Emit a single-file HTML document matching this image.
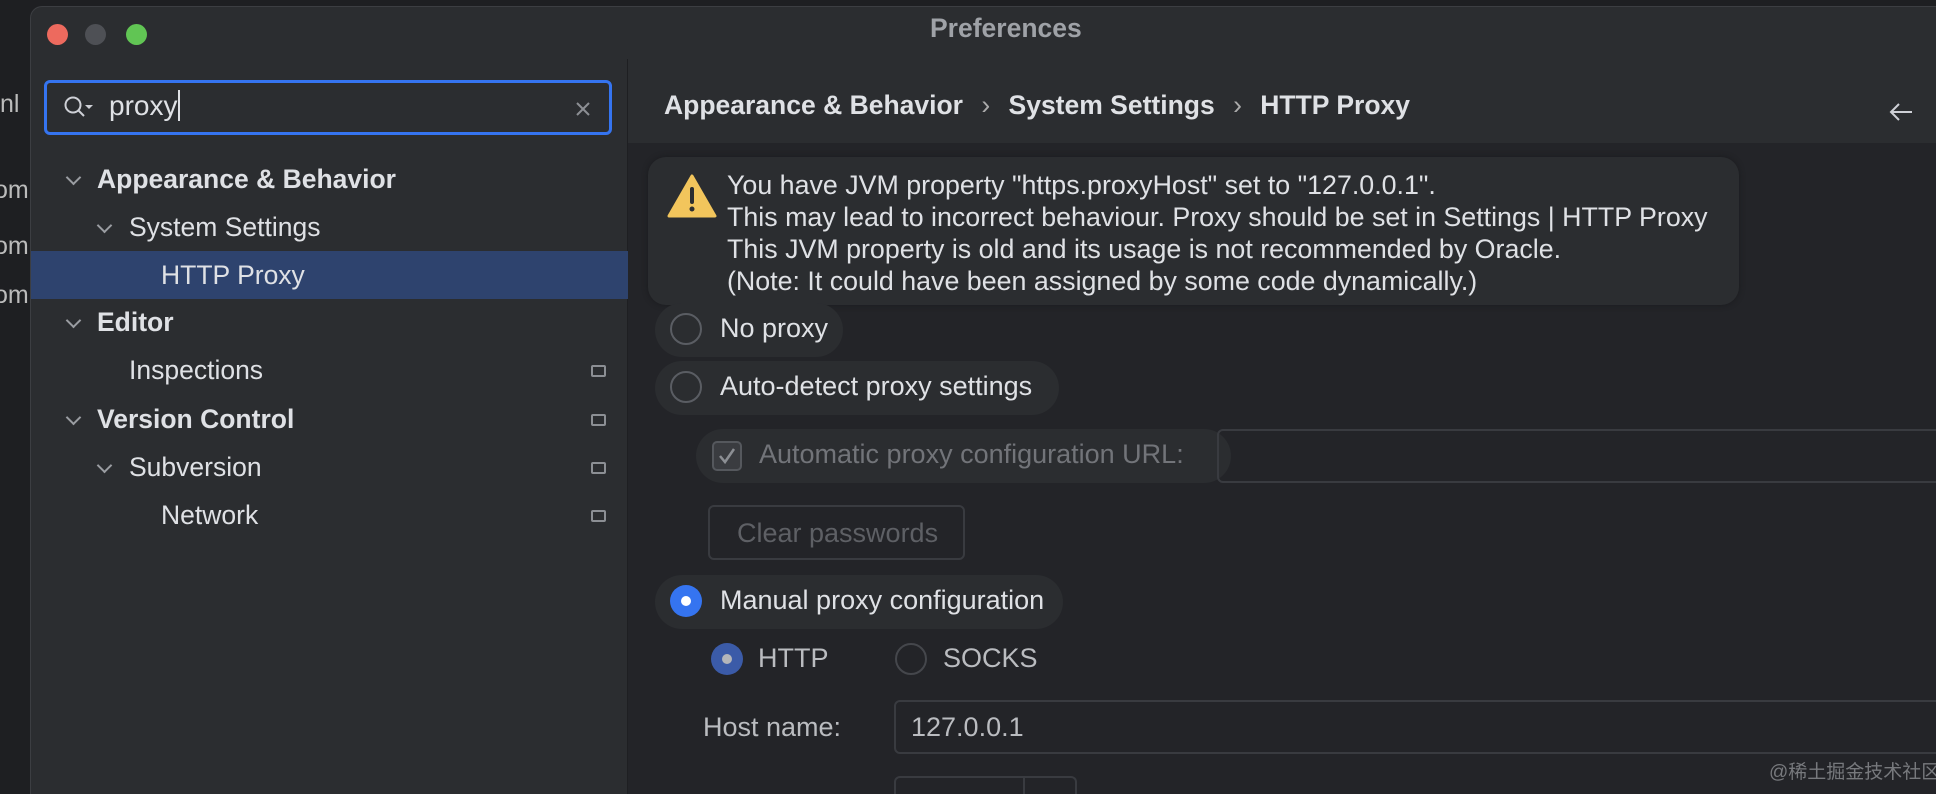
<!DOCTYPE html>
<html><head><meta charset="utf-8"><style>
*{margin:0;padding:0;box-sizing:border-box}
html,body{width:1936px;height:794px;overflow:hidden}
body{background:#1e1f22;font-family:"Liberation Sans","Noto Sans CJK SC",sans-serif;color:#dfe1e5;position:relative}
.a{position:absolute;white-space:nowrap}
.win{position:absolute;left:30px;top:6px;width:1906px;height:788px;background:#2b2d30;border-radius:12px 0 0 0;border-left:1px solid #3c3e42;border-top:1px solid #3c3e42;overflow:hidden}
.dot{position:absolute;width:21px;height:21px;border-radius:50%;top:17px}
.tree{font-size:26.5px;color:#dfe1e5}
.chev{position:absolute;width:11px;height:11px;border-right:2px solid #9a9da2;border-bottom:2px solid #9a9da2;transform:rotate(45deg)}
.pill{position:absolute;background:#2b2d30;border-radius:27px}
.radio{position:absolute;width:32px;height:32px;border-radius:50%;border:2px solid #5a5d63}
.lbl{font-size:27px;color:#dfe1e5}
.ic{position:absolute;width:15px;height:12px;border:2px solid #8c8f94;border-radius:2px}
</style></head><body>
<div class="a" style="left:0;top:90px;font-size:25px;color:#bbb">nl</div>
<div class="a" style="left:-6px;top:176px;font-size:25px;color:#bbb">om</div>
<div class="a" style="left:-6px;top:232px;font-size:25px;color:#bbb">om</div>
<div class="a" style="left:-6px;top:281px;font-size:25px;color:#bbb">om</div>
<div class="win">
 <div class="dot" style="left:16px;background:#ed6a5e"></div>
 <div class="dot" style="left:54px;background:#4e5055"></div>
 <div class="dot" style="left:95px;background:#61c554"></div>
 <div class="a" style="left:899px;top:6px;font-size:26.5px;font-weight:bold;color:#9fa2a7">Preferences</div>
 <div class="a" style="left:597px;top:136px;width:1310px;height:652px;background:#232428"></div>
 <div class="a" style="left:596px;top:52px;width:1px;height:736px;background:#1e1f22"></div>
 <div class="a" style="left:13px;top:73px;width:568px;height:55px;border:3px solid #3574f0;border-radius:6px;background:#2b2d30"></div>
 <svg class="a" style="left:32px;top:88px" width="34" height="26" viewBox="0 0 34 26"><circle cx="10" cy="10" r="7.5" fill="none" stroke="#ced0d6" stroke-width="2"/><path d="M15.5 15.5L21 21" stroke="#ced0d6" stroke-width="2"/><path d="M22 10h8l-4 4z" fill="#ced0d6"/></svg>
 <div class="a" style="left:78px;top:83px;font-size:28px;color:#dfe1e5">proxy<span style="border-left:2px solid #dfe1e5;margin-left:1px"></span></div>
 <svg class="a" style="left:544px;top:94px" width="16" height="16"><path d="M2 2L14 14M14 2L2 14" stroke="#8c8f94" stroke-width="2"/></svg>
 <div class="chev" style="left:37px;top:165px"></div>
 <div class="a tree" style="left:66px;top:157px;font-weight:bold">Appearance &amp; Behavior</div>
 <div class="chev" style="left:68px;top:213px"></div>
 <div class="a tree" style="left:98px;top:205px">System Settings</div>
 <div class="a" style="left:0;top:244px;width:597px;height:48px;background:#2e436e"></div>
 <div class="a tree" style="left:130px;top:253px">HTTP Proxy</div>
 <div class="chev" style="left:37px;top:308px"></div>
 <div class="a tree" style="left:66px;top:300px;font-weight:bold">Editor</div>
 <div class="a tree" style="left:98px;top:348px">Inspections</div>
 <div class="ic" style="left:560px;top:358px"></div>
 <div class="chev" style="left:37px;top:405px"></div>
 <div class="a tree" style="left:66px;top:397px;font-weight:bold">Version Control</div>
 <div class="ic" style="left:560px;top:407px"></div>
 <div class="chev" style="left:68px;top:453px"></div>
 <div class="a tree" style="left:98px;top:445px">Subversion</div>
 <div class="ic" style="left:560px;top:455px"></div>
 <div class="a tree" style="left:130px;top:493px">Network</div>
 <div class="ic" style="left:560px;top:503px"></div>
 <div class="a" style="left:633px;top:83px;font-size:26.5px;font-weight:bold;color:#dfe1e5">Appearance &amp; Behavior <span style="font-weight:normal;color:#aaa;margin:0 11px">›</span> System Settings <span style="font-weight:normal;color:#aaa;margin:0 11px">›</span> HTTP Proxy</div>
 <svg class="a" style="left:1857px;top:95px" width="26" height="20"><path d="M24 10H3M11 2L3 10l8 8" fill="none" stroke="#ced0d6" stroke-width="2"/></svg>
 <div class="a" style="left:617px;top:150px;width:1091px;height:148px;background:#2b2d30;border-radius:18px;box-shadow:0 0 6px #1a1b1e"></div>
 <svg class="a" style="left:636px;top:167px" width="50" height="44" viewBox="0 0 50 44"><path d="M25 2L48 42H2z" fill="#f2c55c" stroke="#f2c55c" stroke-width="3" stroke-linejoin="round"/><rect x="23" y="13" width="4" height="17" rx="2" fill="#2b2d30"/><circle cx="25" cy="35" r="2.5" fill="#2b2d30"/></svg>
 <div class="a" style="left:696px;top:162px;font-size:26.8px;line-height:32px;color:#dfe1e5">You have JVM property "https.proxyHost" set to "127.0.0.1".<br>This may lead to incorrect behaviour. Proxy should be set in Settings | HTTP Proxy<br>This JVM property is old and its usage is not recommended by Oracle.<br>(Note: It could have been assigned by some code dynamically.)</div>
 <div class="pill" style="left:624px;top:296px;width:188px;height:54px"></div>
 <div class="radio" style="left:639px;top:306px"></div>
 <div class="a lbl" style="left:689px;top:306px">No proxy</div>
 <div class="pill" style="left:624px;top:354px;width:404px;height:54px"></div>
 <div class="radio" style="left:639px;top:364px"></div>
 <div class="a lbl" style="left:689px;top:364px">Auto-detect proxy settings</div>
 <div class="pill" style="left:665px;top:422px;width:535px;height:54px"></div>
 <div class="a" style="left:681px;top:434px;width:30px;height:30px;border:2px solid #55585d;border-radius:5px;background:#3a3c40"></div>
 <svg class="a" style="left:686px;top:440px" width="20" height="18"><path d="M3 9l5 6L17 2" fill="none" stroke="#8c8f94" stroke-width="2.5"/></svg>
 <div class="a lbl" style="left:728px;top:432px;color:#727479">Automatic proxy configuration URL:</div>
 <div class="a" style="left:1186px;top:422px;width:730px;height:54px;border:2px solid #393b40;border-radius:6px"></div>
 <div class="a" style="left:677px;top:498px;width:257px;height:55px;border:2px solid #393b40;border-radius:6px"></div>
 <div class="a lbl" style="left:706px;top:511px;color:#5e6065">Clear passwords</div>
 <div class="pill" style="left:624px;top:568px;width:408px;height:54px"></div>
 <div class="a" style="left:639px;top:578px;width:32px;height:32px;border-radius:50%;background:#3574f0"></div>
 <div class="a" style="left:650px;top:589px;width:10px;height:10px;border-radius:50%;background:#fff"></div>
 <div class="a lbl" style="left:689px;top:578px">Manual proxy configuration</div>
 <div class="a" style="left:680px;top:636px;width:32px;height:32px;border-radius:50%;background:#3b5ba8"></div>
 <div class="a" style="left:691px;top:647px;width:10px;height:10px;border-radius:50%;background:#b4b6ba"></div>
 <div class="a lbl" style="left:727px;top:636px;color:#babcc0">HTTP</div>
 <div class="radio" style="left:864px;top:636px;border-color:#45474c"></div>
 <div class="a lbl" style="left:912px;top:636px;color:#babcc0">SOCKS</div>
 <div class="a lbl" style="left:672px;top:705px;color:#babcc0">Host name:</div>
 <div class="a" style="left:863px;top:693px;width:1053px;height:54px;border:2px solid #393b40;border-radius:6px"></div>
 <div class="a lbl" style="left:880px;top:705px;color:#babcc0">127.0.0.1</div>
 <div class="a" style="left:863px;top:769px;width:183px;height:19px;border:2px solid #393b40;border-bottom:none;border-radius:6px 6px 0 0"></div>
 <div class="a" style="left:992px;top:769px;width:2px;height:19px;background:#393b40"></div>
 <div class="a" style="left:1738px;top:754px;font-size:19px;line-height:24px;color:#77797d">@稀土掘金技术社区</div>
</div>
</body></html>
